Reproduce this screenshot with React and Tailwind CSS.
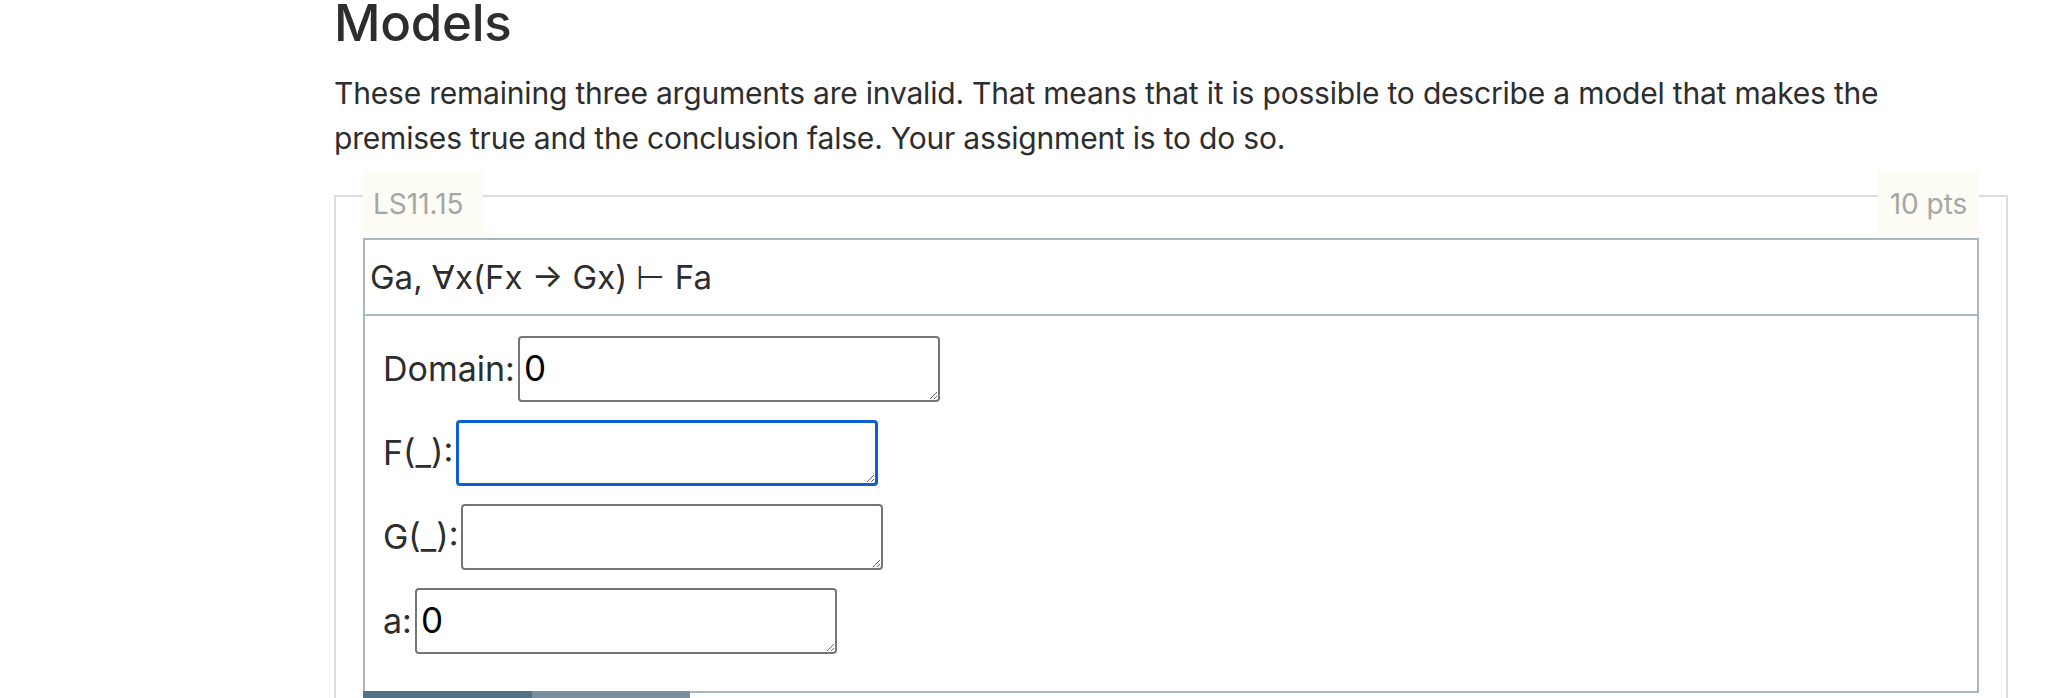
import React from 'react';

const fields = [
  { label: 'Domain:', value: '0' },
  { label: 'F(_):', value: '', focused: true },
  { label: 'G(_):', value: '' },
  { label: 'a:', value: '0' },
];

const ModelField = ({ label, value, focused }) => (
  <div className="flex items-center h-[66px]">
    <span className="text-[34px] leading-[44px] text-[#2d2d2d]">{label}</span>
    <textarea
      defaultValue={value}
      rows={1}
      className={`ml-[3px] w-[422px] h-[66px] px-[4px] py-[8px] text-[35px] leading-[44px] text-black bg-white rounded-[4px] outline-none ${focused ? 'border-[3px] border-[#0b5fcf]' : 'border-2 border-[#767676]'}`}
    />
  </div>
);

export default function App() {
  return (
    <div className="min-h-screen bg-white font-[Inter,'Noto_Sans',sans-serif] text-[#2d2d2d] pl-[334px] overflow-hidden">
      <div className="w-[1674px]">
        <h1 className="-mt-[2px] text-[51px] leading-[50px] font-medium tracking-[-0.3px]">Models</h1>
        <p className="mt-[23px] text-[30px] leading-[45px] tracking-[-0.2px]">
          These remaining three arguments are invalid. That means that it is possible to describe a model that makes the premises true and the conclusion false. Your assignment is to do so.
        </p>

        <div className="mt-[10px]">
          {/* fieldset top edge with the two legends */}
          <div className="flex h-[63px]">
            <div className="w-[29px] mt-[24px] border-t-2 border-l-2 border-[#dddddd]" />
            <div className="w-[120px] bg-[#fcfcf5] pl-[10px] pt-[16px] text-[28px] leading-[34px] text-[#a6a6a6]">LS11.15</div>
            <div className="flex-1 mt-[24px] border-t-2 border-[#dddddd]" />
            <div className="w-[101px] bg-[#fcfcf5] flex justify-center pt-[16px] text-[28px] leading-[34px] text-[#a6a6a6]">10 pts</div>
            <div className="w-[29px] mt-[24px] border-t-2 border-r-2 border-[#dddddd]" />
          </div>

          <div className="border-x-2 border-[#dddddd] px-[27px] pt-[4px] pb-[20px]">
            <div className="border-2 border-[#a9b7c1]">
              <div className="flex items-center h-[76px] pl-[5px] border-b-2 border-[#a9b7c1] text-[33px] leading-[40px]">
                Ga, ∀x(Fx → Gx) ⊢ Fa
              </div>
              <div className="flex flex-col gap-[18px] pl-[18px] pt-[20px] pb-[37px]">
                {fields.map((f) => (
                  <ModelField key={f.label} {...f} />
                ))}
              </div>
            </div>
            <div className="flex -mt-[2px] h-[8px]">
              <div className="w-[169px] bg-[#537285]" />
              <div className="w-[158px] bg-[#7a8f9e]" />
            </div>
          </div>
        </div>
      </div>
    </div>
  );
}
